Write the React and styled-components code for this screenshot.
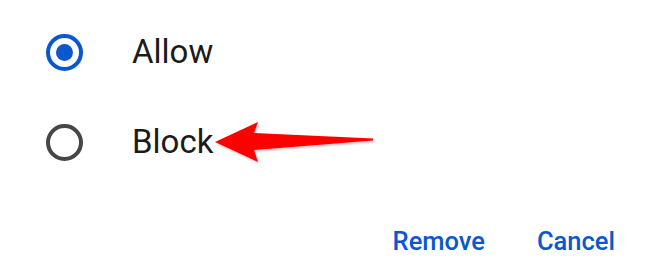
import React from "react";
import styled, { createGlobalStyle } from "styled-components";

const Global = createGlobalStyle`
  html, body { margin: 0; padding: 0; background: #ffffff; }
  body { font-family: Roboto, "Noto Sans", "Liberation Sans", sans-serif; }
`;

const Dialog = styled.div`
  position: relative;
  width: 650px;
  height: 261px;
  background: #ffffff;
  display: flex;
  flex-direction: column;
`;

const Options = styled.div`
  display: flex;
  flex-direction: column;
  padding: 7px 0 0 46px;
`;

const Option = styled.label`
  display: flex;
  align-items: center;
  height: 90px;
  gap: 49px;
  cursor: pointer;
`;

const Radio = styled.span`
  box-sizing: border-box;
  width: 37px;
  height: 37px;
  border-radius: 50%;
  border: 4px solid ${(p) => (p.$checked ? "#0b57d0" : "#444746")};
  display: flex;
  align-items: center;
  justify-content: center;
  flex-shrink: 0;
  &::after {
    content: "";
    width: 17px;
    height: 17px;
    border-radius: 50%;
    background: #0b57d0;
    display: ${(p) => (p.$checked ? "block" : "none")};
  }
`;

const Label = styled.span`
  font-size: 33px;
  line-height: 40px;
  color: #1b1b1b;
  font-weight: 400;
`;

const Actions = styled.div`
  display: flex;
  justify-content: flex-end;
  gap: 52px;
  padding-right: 35px;
  margin-top: 40px;
`;

const TextButton = styled.button`
  border: none;
  background: none;
  padding: 0;
  font-family: inherit;
  font-size: 25.5px;
  line-height: 28px;
  font-weight: 500;
  color: #0b57d0;
  cursor: pointer;
`;

const ArrowLayer = styled.svg`
  position: absolute;
  left: 0;
  top: 0;
  width: 650px;
  height: 261px;
  pointer-events: none;
  overflow: visible;
`;

export default function App() {
  return (
    <>
      <Global />
      <Dialog>
        <Options>
          <Option>
            <Radio $checked />
            <Label>Allow</Label>
          </Option>
          <Option>
            <Radio />
            <Label>Block</Label>
          </Option>
        </Options>
        <Actions>
          <TextButton>Remove</TextButton>
          <TextButton>Cancel</TextButton>
        </Actions>
        <ArrowLayer viewBox="0 0 650 261">
          <defs>
            <filter id="sh" x="-10%" y="-30%" width="120%" height="160%">
              <feDropShadow dx="1" dy="1.5" stdDeviation="1.2" floodColor="#000" floodOpacity="0.25" />
            </filter>
          </defs>
          <path
            d="M215 142 L258 122 L254 133 L373 138.5 L373 140.5 L254 150 L258 162 Z"
            fill="#ff0000"
            filter="url(#sh)"
          />
        </ArrowLayer>
      </Dialog>
    </>
  );
}
